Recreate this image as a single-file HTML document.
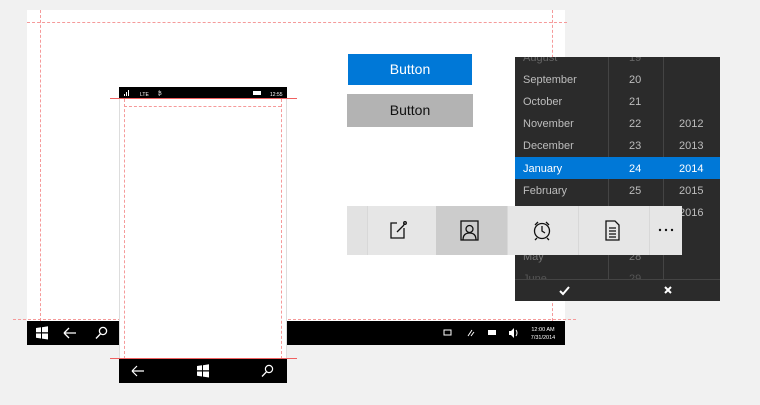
<!DOCTYPE html>
<html><head><style>
*{margin:0;padding:0;box-sizing:border-box}
body{width:760px;height:405px;background:#f1f1f1;position:relative;overflow:hidden;font-family:"Segoe UI","Liberation Sans",sans-serif}
.a{position:absolute}
.dh{position:absolute;height:0;border-top:1px dashed #f59a9a}
.dv{position:absolute;width:0;border-left:1px dashed #f59a9a}
.dp .r{position:absolute;left:0;width:205px;height:22px;line-height:22px;font-size:11px;color:#bdbdbd}
.dp .r span{position:absolute}
.m{left:8px}.d{left:114px}.y{left:164px}
.cb div{position:absolute;top:0;height:49px;border-left:1px solid #d8d8d8}
</style></head><body>
<div class="a" style="left:27px;top:10px;width:538px;height:311px;background:#fff"></div>
<div class="a" style="left:27px;top:321px;width:538px;height:24px;background:#000"></div>
<div class="dh" style="left:27px;top:22px;width:540px"></div>
<div class="dv" style="left:40px;top:10px;height:311px"></div>
<div class="dv" style="left:552px;top:10px;height:311px"></div>
<div class="dh" style="left:13px;top:319px;width:563px"></div>
<svg class="a" style="left:27px;top:321px" width="538" height="24">
<g fill="#fff"><path d="M9 7l5-.7v5H9zM15 6.2l6-.9v6h-6zM9 12.5h5v5L9 16.8zM15 12.5h6v6l-6-.9z"/></g>
<path d="M37 12h12M37 12l5-5M37 12l5 5" stroke="#fff" stroke-width="1.3" fill="none"/>
<circle cx="76" cy="10" r="3.6" stroke="#fff" stroke-width="1.3" fill="none"/><path d="M73.5 12.8L69 17.5" stroke="#fff" stroke-width="1.4"/>
<rect x="417" y="9" width="7" height="5" fill="none" stroke="#fff"/>
<path d="M441 15l4-6M444 15l3-4" stroke="#fff"/>
<rect x="461" y="9" width="8" height="5" fill="#fff"/>
<path d="M482 10h2l3-3v10l-3-3h-2z" fill="#fff"/><path d="M489 9q2 3 0 6" stroke="#fff" fill="none"/>
<text x="516" y="10" fill="#fff" font-size="5.5" text-anchor="middle" font-family="Liberation Sans">12:00 AM</text>
<text x="516" y="18" fill="#fff" font-size="5.5" text-anchor="middle" font-family="Liberation Sans">7/31/2014</text>
</svg>
<div class="a" style="left:119px;top:87px;width:168px;height:296px;background:#fff;border:1px solid #ddd"></div>
<div class="a" style="left:119px;top:87px;width:168px;height:12px;background:#000"></div>
<svg class="a" style="left:119px;top:87px" width="168" height="12"><g fill="#fff" font-size="5" font-family="Liberation Sans"><rect x="5" y="7" width="1" height="2"/><rect x="7" y="5" width="1" height="4"/><rect x="9" y="3" width="1" height="6"/><text x="21" y="9">LTE</text><text x="39" y="8">₿</text><rect x="134" y="4" width="8" height="4"/><text x="151" y="9">12:55</text></g></svg>
<div class="a" style="left:110px;top:98px;width:187px;height:1px;background:#f06060"></div>
<div class="dh" style="left:124px;top:106px;width:157px"></div>
<div class="dv" style="left:124px;top:99px;height:260px"></div>
<div class="dv" style="left:281px;top:99px;height:260px"></div>
<div class="a" style="left:119px;top:359px;width:168px;height:24px;background:#000"></div>
<div class="a" style="left:110px;top:358px;width:187px;height:1px;background:#f06060"></div>
<svg class="a" style="left:119px;top:359px" width="168" height="24">
<path d="M13 12h12M13 12l5-5M13 12l5 5" stroke="#fff" stroke-width="1.2" fill="none"/>
<g fill="#fff"><path d="M78 7l5-.7v5H78zM84 6.2l6-.9v6h-6zM78 12.5h5v5L78 16.8zM84 12.5h6v6l-6-.9z"/></g>
<circle cx="150" cy="10" r="3.6" stroke="#fff" stroke-width="1.2" fill="none"/><path d="M147.5 12.8L143 17.5" stroke="#fff" stroke-width="1.3"/>
</svg>
<div class="a" style="left:348px;top:54px;width:124px;height:31px;background:#0078d7;color:#fff;font-size:14px;text-align:center;line-height:31px">Button</div>
<div class="a" style="left:347px;top:94px;width:126px;height:33px;background:#b3b3b3;color:#111;font-size:14px;text-align:center;line-height:33px">Button</div>
<div class="a dp" style="left:515px;top:57px;width:205px;height:244px;background:#2b2b2b;overflow:hidden">
<div class="a" style="left:93px;top:0;width:1px;height:222px;background:#444"></div>
<div class="a" style="left:148px;top:0;width:1px;height:222px;background:#444"></div>
<div class="r" style="top:-10px;color:#666"><span class="m">August</span><span class="d">19</span></div>
<div class="r" style="top:12px"><span class="m">September</span><span class="d">20</span></div>
<div class="r" style="top:34px"><span class="m">October</span><span class="d">21</span></div>
<div class="r" style="top:56px"><span class="m">November</span><span class="d">22</span><span class="y">2012</span></div>
<div class="r" style="top:78px"><span class="m">December</span><span class="d">23</span><span class="y">2013</span></div>
<div class="r" style="top:100px;background:#0078d7;color:#fff;line-height:24px"><span class="m">January</span><span class="d">24</span><span class="y">2014</span></div>
<div class="r" style="top:123px"><span class="m">February</span><span class="d">25</span><span class="y">2015</span></div>
<div class="r" style="top:145px"><span class="y">2016</span></div>
<div class="r" style="top:189px;color:#777"><span class="m">May</span><span class="d">28</span></div>
<div class="r" style="top:211px;color:#555"><span class="m">June</span><span class="d">29</span></div>
<div class="a" style="left:0;top:222px;width:205px;height:22px;background:#2b2b2b;border-top:1px solid #444"></div>
<svg class="a" style="left:0;top:222px" width="205" height="22"><path d="M45 12l3 3 6-7" stroke="#fff" stroke-width="2" fill="none"/><path d="M150 8l6 6M156 8l-6 6" stroke="#fff" stroke-width="2"/></svg>
</div>
<div class="a cb" style="left:347px;top:206px;width:335px;height:49px;background:#e6e6e6">
<div style="left:0;width:20px;border:none;background:#e2e2e2"></div>
<div style="left:20px;width:69px"></div>
<div style="left:89px;width:71px;background:#ccc;border:none"></div>
<div style="left:160px;width:71px"></div>
<div style="left:231px;width:71px"></div>
<div style="left:302px;width:33px"></div>
</div>
<svg class="a" style="left:347px;top:206px" width="335" height="49" fill="none" stroke="#111" stroke-width="1.3">
<path d="M47 17h-3v15h13v-10M45 17h5M57 17v2"/><path d="M50 26l7-7"/><circle cx="58" cy="17" r="1.3"/>
<rect x="114" y="15" width="17" height="19"/><circle cx="122.5" cy="23" r="3.5"/><path d="M116 34q0-7 6.5-7t6.5 7"/>
<circle cx="195" cy="25" r="7.5"/><path d="M195 20v5l3 2M188 19l3-3M202 19l-3-3M190 32l-2 2M200 32l2 2"/>
<path d="M259 15h9l4 4v15h-13z"/><path d="M262 22h7M262 25h7M262 28h7M262 31h7"/>
<g fill="#111" stroke="none"><circle cx="313" cy="24" r="1.2"/><circle cx="319" cy="24" r="1.2"/><circle cx="325" cy="24" r="1.2"/></g>
</svg>
</body></html>
